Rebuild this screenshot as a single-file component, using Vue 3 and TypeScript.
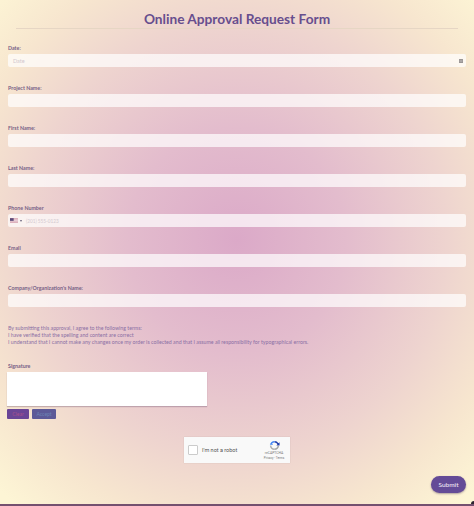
<script setup lang="ts">
const fields: { label: string; placeholder?: string; kind?: string }[] = [
  { label: 'Date:', placeholder: 'Date', kind: 'date' },
  { label: 'Project Name:' },
  { label: 'First Name:' },
  { label: 'Last Name:' },
  { label: 'Phone Number', placeholder: '(201) 555-0123', kind: 'phone' },
  { label: 'Email' },
  { label: "Company/Organization's Name:" },
]
</script>

<template>
  <main class="page">
    <h1 class="title">Online Approval Request Form</h1>
    <div class="fields">
      <div v-for="f in fields" :key="f.label" class="field">
        <label class="label">{{ f.label }}</label>
        <div class="input">
          <svg v-if="f.kind === 'phone'" class="flag" viewBox="0 0 12 7" aria-hidden="true">
            <rect width="12" height="7" fill="#d39aa8" />
            <rect y="1" width="12" height="1" fill="#f3e6ec" />
            <rect y="3" width="12" height="1" fill="#f3e6ec" />
            <rect y="5" width="12" height="1" fill="#f3e6ec" />
            <rect width="5.5" height="4" fill="#5b4a78" />
          </svg>
          <span v-if="f.kind === 'phone'" class="caret"></span>
          <span v-if="f.placeholder" class="placeholder" :class="f.kind">{{ f.placeholder }}</span>
          <svg v-if="f.kind === 'date'" class="cal" viewBox="0 0 6 6" aria-hidden="true">
            <rect width="6" height="6" rx="0.5" fill="#9a9594" />
            <rect x="1" y="2" width="4" height="0.6" fill="#c9c5c5" />
            <rect x="1" y="3.5" width="4" height="0.6" fill="#c9c5c5" />
          </svg>
        </div>
      </div>
    </div>

    <p class="terms">
      By submitting this approval, I agree to the following terms:<br />
      I have verified that the spelling and content are correct<br />
      I understand that I cannot make any changes once my order is collected and that I assume all responsibility for typographical errors.
    </p>

    <section class="signature">
      <div class="label">Signature</div>
      <div class="pad"></div>
      <div class="sig-actions">
        <button type="button" class="sig-btn clear">Clear</button>
        <button type="button" class="sig-btn accept">Accept</button>
      </div>
    </section>

    <div class="captcha-row">
      <div class="captcha">
        <span class="check"></span>
        <span class="robot">I'm not a robot</span>
        <div class="brand">
          <svg class="re-logo" viewBox="0 0 24 24" aria-hidden="true">
            <path d="M12 2a10 10 0 0 1 8.6 5l2.4-2v7h-7l2.4-2.4A6.8 6.8 0 0 0 12 5.2z" fill="#1c3aa9" />
            <path d="M22 12a10 10 0 0 1-10 10v0l-1-3.3a6.8 6.8 0 0 0 7.8-6.7z" fill="#a6a6a6" />
            <path d="M2 12a10 10 0 0 1 10-10v3.2a6.8 6.8 0 0 0-5.4 2.7L9 10.5H2z" fill="#4285f4" />
            <path d="M2 12h3.2A6.8 6.8 0 0 0 11 18.7l1 3.3A10 10 0 0 1 2 12z" fill="#ababab" />
          </svg>
          <span class="re-name">reCAPTCHA</span>
          <span class="re-links">Privacy - Terms</span>
        </div>
      </div>
    </div>

    <div class="submit-row">
      <button type="button" class="submit">Submit</button>
    </div>
    <span class="corner"></span>
  </main>
</template>

<style>
html, body { margin: 0; padding: 0; }
</style>

<style scoped>
.page {
  position: relative;
  box-sizing: border-box;
  width: 474px;
  height: 506px;
  overflow: hidden;
  padding: 10px 8px 0 8px;
  border-bottom: 2px solid #74506f;
  background: radial-gradient(ellipse 340px 350px at 237px 240px, #dba9c8 0%, #e3bccd 32%, #eed4cf 62%, #f7e6cf 82%, #fdf5d5 100%);
  font-family: "Lato", "Open Sans", sans-serif;
  color: #5f4a80;
}
.title {
  margin: 0 8px;
  height: 18px;
  border-bottom: 1px solid #e6d6c4;
  text-align: center;
  font-size: 13.7px;
  line-height: 18px;
  font-weight: 700;
  color: #674e8e;
}
.fields {
  display: flex;
  flex-direction: column;
  gap: 17px;
  margin-top: 15px;
}
.field { display: flex; flex-direction: column; gap: 1px; }
.label {
  height: 9px;
  font-size: 5.3px;
  line-height: 9px;
  font-weight: 700;
  color: #775f86;
}
.input {
  box-sizing: border-box;
  height: 13px;
  width: 458px;
  display: flex;
  align-items: center;
  padding: 0 3px 0 5px;
  border-radius: 2px;
  background: rgba(255, 255, 255, 0.7);
}
.placeholder { font-size: 5.5px; color: #d2c8cf; }
.placeholder.phone { font-size: 4.7px; }
.flag { width: 8px; height: 5px; margin-left: -3px; }
.caret {
  width: 0;
  height: 0;
  margin: 0 4px 0 2px;
  border-left: 1.5px solid transparent;
  border-right: 1.5px solid transparent;
  border-top: 2px solid #66607a;
}
.cal { width: 4px; height: 4px; margin-left: auto; }
.terms {
  margin: 18px 0 0;
  font-size: 5.25px;
  line-height: 6.8px;
  color: #8a6fa4;
}
.signature { margin-top: 17px; }
.pad {
  width: 200px;
  height: 34px;
  margin: 1px 0 0 -1px;
  background: #fff;
  box-shadow: 0 1px 1px rgba(110, 80, 110, 0.35);
}
.sig-actions { display: flex; gap: 3px; margin: 3px 0 0 -1px; }
.sig-btn {
  height: 10px;
  padding: 0;
  border: 0;
  border-radius: 1px;
  font: inherit;
  font-size: 5px;
  line-height: 10px;
}
.clear { width: 22px; background: #6a4596; color: #a9508c; }
.accept { width: 24px; background: #5d5a98; color: #6d84b4; }
.captcha-row { display: flex; justify-content: center; margin-top: 18px; }
.captcha {
  box-sizing: border-box;
  width: 106px;
  height: 26px;
  display: flex;
  align-items: center;
  padding: 0 4px 0 4px;
  background: #f9f9f9;
  box-shadow: 0 0 1px rgba(0, 0, 0, 0.18);
  font-family: "Roboto", sans-serif;
}
.check {
  box-sizing: border-box;
  width: 10px;
  height: 10px;
  border: 1px solid #cbcbcb;
  border-radius: 1px;
  background: #fff;
}
.robot { margin-left: 4px; font-size: 5.5px; color: #555; }
.brand {
  margin-left: auto;
  width: 24px;
  display: flex;
  flex-direction: column;
  align-items: center;
}
.re-logo { width: 11px; height: 11px; }
.re-name { font-size: 3.4px; line-height: 5px; color: #777; }
.re-links { font-size: 3px; line-height: 4px; color: #777; }
.submit-row { display: flex; justify-content: flex-end; margin-top: 13px; }
.submit {
  width: 35px;
  height: 17px;
  padding: 0;
  border: 0;
  border-radius: 9px;
  background: #644b97;
  box-shadow: 0 1px 2px rgba(60, 40, 80, 0.4);
  color: #f0e8f4;
  font: inherit;
  font-size: 6.5px;
  font-weight: 500;
}
.corner {
  position: absolute;
  right: 0;
  bottom: 0;
  width: 3px;
  height: 3px;
  border-top-left-radius: 3px;
  background: #2c2230;
}
</style>
